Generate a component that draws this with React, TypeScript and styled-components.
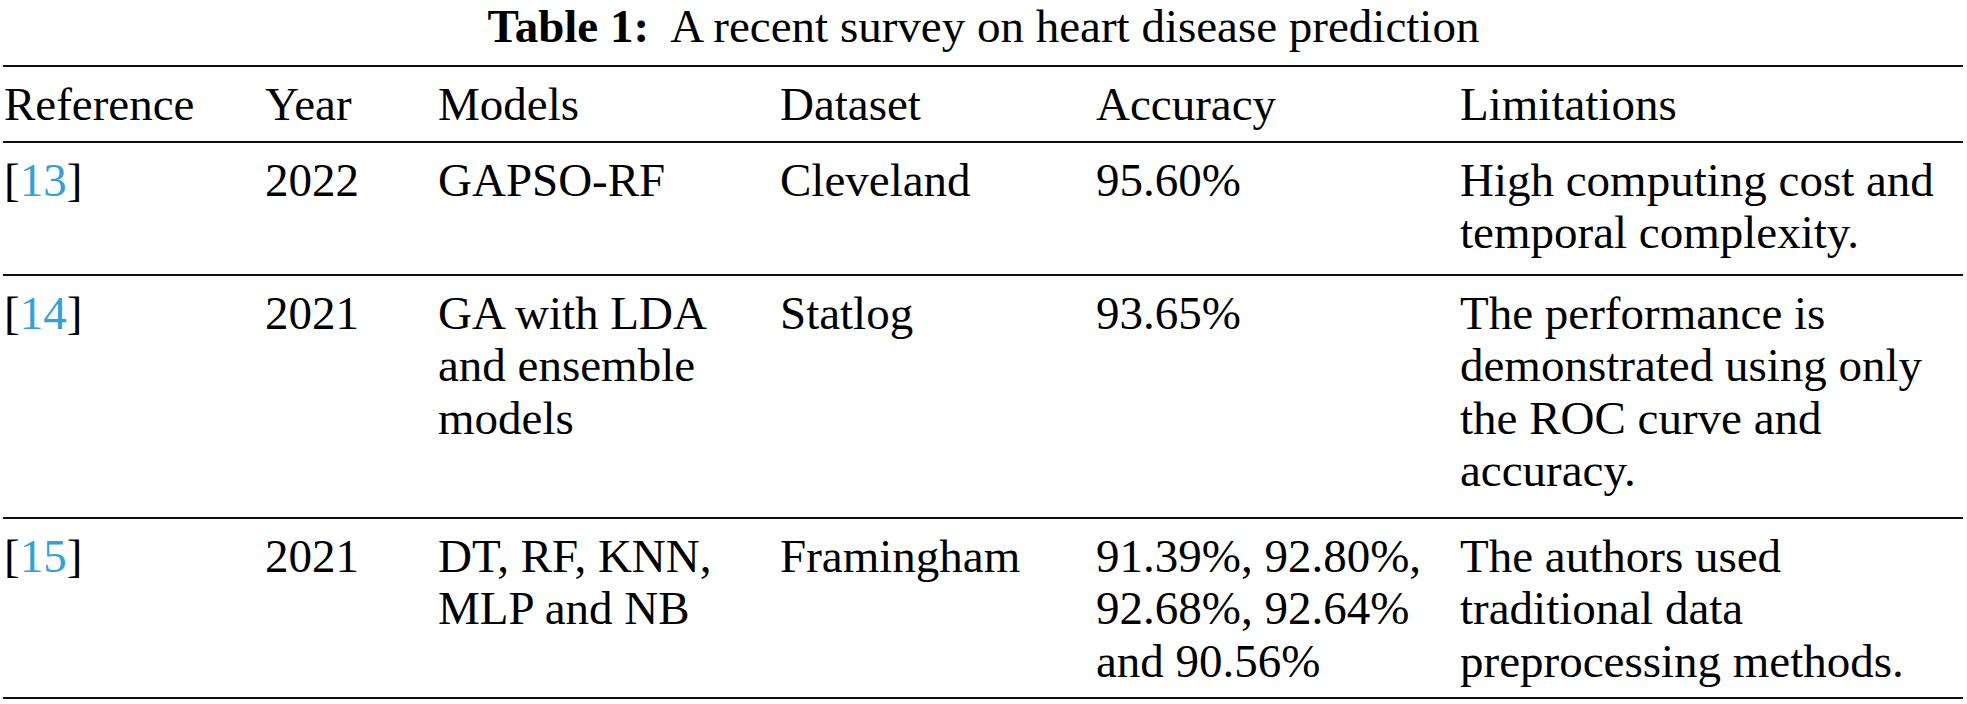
import * as React from 'react';
import styled, { createGlobalStyle } from 'styled-components';

type SurveyRow = {
  id: number;
  year: string;
  models: string;
  dataset: string;
  accuracy: string;
  limitations: string;
  padBottom: number;
};

const GlobalStyle = createGlobalStyle`
  html, body {
    margin: 0;
    padding: 0;
    background: #ffffff;
  }
  body {
    font-family: "Liberation Serif", "Times New Roman", serif;
    color: #000000;
  }
`;

const Page = styled.div`
  width: 1967px;
  height: 704px;
  overflow: hidden;
  background: #ffffff;
`;

const Caption = styled.div`
  font-family: "Liberation Serif", "Times New Roman", serif;
  font-size: 47px;
  line-height: 52px;
  text-align: center;
  margin-bottom: 13px;
  white-space: nowrap;
`;

const CaptionLabel = styled.span`
  font-weight: bold;
  margin-right: 12px;
`;

const Table = styled.div`
  margin: 0 4px 0 3px;
`;

const Row = styled.div<{ $padBottom: number; $top?: boolean }>`
  display: grid;
  grid-template-columns: 261px 173px 342px 316px 364px 1fr;
  padding: 11px 0 ${(p) => p.$padBottom}px;
  border-bottom: 2px solid #111111;
  border-top: ${(p) => (p.$top ? '2px solid #111111' : 'none')};
  font-family: "Liberation Serif", "Times New Roman", serif;
  font-size: 47px;
  line-height: 52.5px;
`;

const Cell = styled.div`
  padding-left: 1px;
  padding-right: 12px;
`;

const RefLink = styled.span`
  color: #35a0d8;
`;

const rows: Array<SurveyRow> = [
  {
    id: 13,
    year: '2022',
    models: 'GAPSO-RF',
    dataset: 'Cleveland',
    accuracy: '95.60%',
    limitations: 'High computing cost and temporal complexity.',
    padBottom: 15,
  },
  {
    id: 14,
    year: '2021',
    models: 'GA with LDA and ensemble models',
    dataset: 'Statlog',
    accuracy: '93.65%',
    limitations: 'The performance is demonstrated using only the ROC curve and accuracy.',
    padBottom: 20,
  },
  {
    id: 15,
    year: '2021',
    models: 'DT, RF, KNN, MLP and NB',
    dataset: 'Framingham',
    accuracy: '91.39%, 92.80%, 92.68%, 92.64% and 90.56%',
    limitations: 'The authors used traditional data preprocessing methods.',
    padBottom: 10,
  },
];

export default function App(): React.ReactElement {
  return (
    <Page>
      <GlobalStyle />
      <Caption>
        <CaptionLabel>Table 1:</CaptionLabel> A recent survey on heart disease prediction
      </Caption>

      <Table>
        <Row $top $padBottom={10}>
          <Cell>Reference</Cell>
          <Cell>Year</Cell>
          <Cell>Models</Cell>
          <Cell>Dataset</Cell>
          <Cell>Accuracy</Cell>
          <Cell>Limitations</Cell>
        </Row>

        {rows.map(({ id, year, models, dataset, accuracy, limitations, padBottom }: SurveyRow) => (
          <Row key={String(id)} $padBottom={padBottom}>
            <Cell>
              [<RefLink>{id}</RefLink>]
            </Cell>
            <Cell>{year}</Cell>
            <Cell>{models}</Cell>
            <Cell>{dataset}</Cell>
            <Cell>{accuracy}</Cell>
            <Cell>{limitations}</Cell>
          </Row>
        ))}
      </Table>
    </Page>
  );
}
